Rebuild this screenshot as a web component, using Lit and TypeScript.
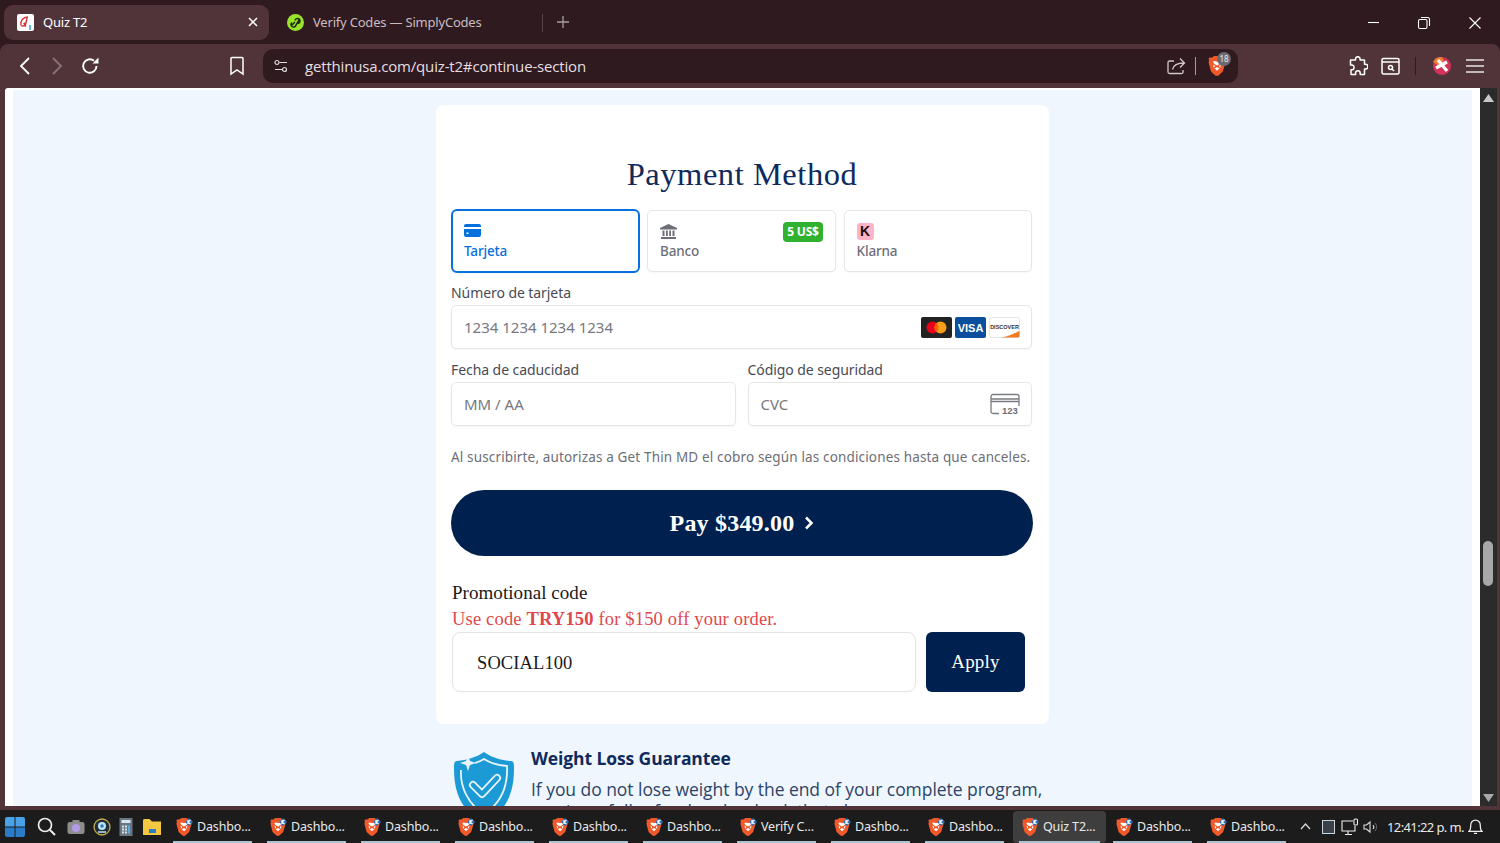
import { LitElement, html, css } from "lit";
import { customElement } from "lit/decorators.js";

const brave = (cls = "ic16") => html`<svg class=${cls} viewBox="0 0 16 18"><path fill="#f1592a" d="M3.2 1.6 5.4 0h5.2l2.2 1.6 1.9-.2.9 1.4-.6 1 .6 2-2.4 8.2-3.8 3.6L8 18l-1.600-.4-3.800-3.600L.4 5.800l.6-2-.7-1 .9-1.400z"/><path fill="#fff" d="M8 8.600 5.400 7 4.300 4.900l1.900-.3L8 5.200l1.800-.6 1.900.3L10.600 7zM8 10l2.200 1.200L8 13.200l-2.200-2zM4.600 7.600l1.700 1.500-1.200 1.800zm6.800 0-.5 3.300-1.200-1.800z"/></svg>`;

const taskIcon = html`<span class="task-ico">${brave("ic16")}<svg class="task-k" viewBox="0 0 10 10"><path fill="#2b6fb8" d="M1 5 5 1l4 4-4 4z"/><path stroke="#fff" stroke-width="1.200" fill="none" d="M4 3v4M6.500 3 4 5l2.500 2"/></svg></span>`;

const TASKS = ["Dashbo...", "Dashbo...", "Dashbo...", "Dashbo...", "Dashbo...", "Dashbo...", "Verify C...", "Dashbo...", "Dashbo...", "Quiz T2...", "Dashbo...", "Dashbo..."];

@customElement("app-root")
export class AppRoot extends LitElement {
  static styles = css`
    :host { display: block; width: 1500px; height: 843px; overflow: hidden; font-family: "Noto Sans", sans-serif; }
    * { box-sizing: border-box; }
    svg { display: block; flex: none; }
    .frame { height: 843px; display: flex; flex-direction: column; background: #2f1a20; }

    .tabstrip { height: 44px; display: flex; align-items: flex-start; padding: 5px 0 0 4px; color: #fff; font-size: 13px; flex: none; }
    .tab { width: 265px; height: 35px; display: flex; align-items: center; border-radius: 9px; background: #50343a; padding: 0 11px 1px 13px; }
    .fav { width: 17px; height: 17px; margin-right: 9px; flex: none; }
    .tab-title { flex: 1; letter-spacing: -.2px; }
    .tab.idle { width: 273px; background: none; padding-left: 18px; color: #c9bdc0; }
    .tab-div { width: 1px; height: 18px; background: #5a4248; margin-top: 9px; }
    .plus { margin: 11px 0 0 14px; }
    .winbtns { margin-left: auto; display: flex; height: 35px; align-items: center; padding-right: 19px; gap: 38px; }

    .toolbar { height: 44px; flex: none; background: #50343a; border-radius: 8px 8px 0 0; display: flex; align-items: center; padding-left: 18px; color: #fff; }
    .navs { display: flex; align-items: center; width: 245px; flex: none; }
    .nav-back { margin-right: 18px; }
    .nav-fwd { margin-right: 16px; }
    .nav-book { margin-left: 129px; }
    .urlbar { width: 975px; height: 34px; background: #2f1a20; border-radius: 10px; display: flex; align-items: center; padding: 0 0 0 11px; flex: none; }
    .url { margin-left: 17px; font-size: 15px; color: #e6dfe1; flex: 1; font-family: "Open Sans", "Noto Sans", sans-serif; letter-spacing: -.17px; }
    .url-div { width: 1px; height: 18px; background: #a89a9d; margin: 0 12px 0 9px; }
    .shield { position: relative; width: 30px; height: 24px; display: flex; align-items: center; }
    .shield svg { width: 18px; height: 20px; }
    .count { position: absolute; left: 9px; top: -2px; width: 14px; height: 14px; border-radius: 50%; background: #6a6a72; color: #eee; font-size: 8px; line-height: 14px; text-align: center; }
    .tool-right { display: flex; align-items: center; margin-left: 110px; }
    .tool-right .puzzle { margin-right: 13px; }
    .tool-div { width: 1px; height: 18px; background: #2f1a20; margin: 0 17px 0 15px; }
    .menu { margin-left: 14px; }

    .viewport { height: 718px; flex: none; display: flex; background: #50343a; padding-left: 5px; }
    .page { width: 1475px; height: 718px; overflow: hidden; background: #fff; border-radius: 3px 0 0 0; padding: 2px 8px 0; }
    .page-inner { height: 716px; overflow: hidden; background: #f0f6fe; padding: 15px 0 0 423px; }
    .scrollbar { width: 17px; height: 718px; flex: none; background: #2b2b2b; display: flex; flex-direction: column; align-items: center; justify-content: space-between; padding: 6px 0 4px; position: relative; }
    .thumb { position: absolute; left: 3px; top: 453px; width: 10px; height: 45px; border-radius: 5px; background: #a8a8a8; }

    .card { width: 613px; height: 619px; background: #fff; border-radius: 8px; padding: 50px 17px 0 15px; }
    h1 { margin: 0; font: 400 32.500px/38px "Liberation Serif", serif; color: #0f2a5c; text-align: center; letter-spacing: .55px; padding-left: 1px; }
    .ptabs { display: grid; grid-template-columns: 188.500px 189px 188.500px; gap: 7.500px; margin-top: 17px; }
    .ptab { height: 62px; position: relative; border: 1px solid #e6e6e6; border-radius: 5px; padding: 11px 12px 0; color: #6d6e78; font-size: 13.500px; font-weight: 500; box-shadow: 0 1px 2px rgba(0,0,0,.04); background: #fff; }
    .ptab.on { border: 2px solid #0570de; color: #0570de; padding: 10px 11px 0; margin: -1px 0 0 0; height: 64px; border-radius: 6px; }
    .ptab.on .ptab-ico { margin-bottom: 2px; }
    .ptab-ico { height: 18px; display: flex; align-items: center; margin-bottom: 1px; }
    .ptab-label { line-height: 20px; letter-spacing: -.15px; }
    .badge { position: absolute; top: 11px; right: 12px; height: 20px; width: 40px; border-radius: 4px; background: #30b130; color: #fff; font-size: 12px; font-weight: 700; line-height: 20px; text-align: center; letter-spacing: -.2px; }
    .kl { width: 17px; height: 17px; border-radius: 3px; background: #ffb3c7; color: #17120f; font: 700 14px/17px "Liberation Sans", sans-serif; text-align: center; }

    .field-label { display: block; font-size: 14px; line-height: 20px; color: #30313d; letter-spacing: -.07px; opacity: .88; }
    .stripe { width: 581px; margin-top: 10px; }
    .row { display: grid; grid-template-columns: 285px 284.500px; gap: 11.500px; margin-top: 11px; }
    .box { height: 44px; margin-top: 2px; display: flex; align-items: center; border: 1px solid #e6e6e6; border-radius: 5px; padding: 0 11px 0 12px; background: #fff; box-shadow: 0 1px 2px rgba(0,0,0,.04); }
    input { border: 0; outline: 0; background: none; padding: 0; margin: 0; flex: 1; min-width: 0; font: 400 15px "Noto Sans", sans-serif; color: #30313d; letter-spacing: 0; }
    input::placeholder { color: #77787f; opacity: 1; }
    .brands { display: flex; gap: 3px; }
    .terms { margin: 21px 0 0; font-size: 13.500px; line-height: 20px; color: #6d6e78; white-space: nowrap; letter-spacing: .15px; }

    .pay { display: flex; align-items: center; justify-content: center; gap: 10px; width: 582px; height: 66px; margin-top: 23px; border: 0; border-radius: 33px; background: #00214f; color: #fff; font: 700 24px "Liberation Serif", serif; letter-spacing: .2px; padding: 0; }
    .promo { margin: 26px 0 0 1px; font: 400 19px/22px "Liberation Serif", serif; color: #1a1a1a; letter-spacing: .05px; }
    .hint { margin: 4px 0 0 1px; font: 400 18.500px/22px "Liberation Serif", serif; color: #e0474c; letter-spacing: .17px; }
    .promo-row { display: flex; margin: 2px 0 0 1px; gap: 10px; }
    .promo-box { width: 464px; height: 60px; border: 1px solid #e3e3e3; border-radius: 8px; display: flex; align-items: center; padding: 2px 0 0 24px; }
    .promo-box input { font: 400 18.500px "Liberation Serif", serif; color: #1a1a1a; letter-spacing: .1px; }
    .apply { width: 99px; height: 60px; border: 0; border-radius: 6px; background: #00214f; color: #fff; font: 400 19px "Liberation Serif", serif; letter-spacing: .2px; padding: 0; }

    .guarantee { display: flex; width: 613px; margin-top: 23px; padding-left: 17px; gap: 16px; }
    .g-shield { margin-top: 5px; }
    .g-title { font: 700 17.500px/22px "Open Sans", sans-serif; color: #0f2a5c; letter-spacing: -.1px; }
    .g-text { margin-top: 9px; font: 400 17.500px/22px "Open Sans", sans-serif; color: #2d4468; letter-spacing: -.05px; white-space: nowrap; }

    .gap { height: 4px; flex: none; background: #50343a; }
    .taskbar { flex: 1; background: #1c1c1c; display: flex; align-items: center; color: #e9e9e9; font-size: 12.500px; position: relative; }
    .start { display: flex; align-items: center; width: 171px; padding-left: 5px; flex: none; }
    .start .s-search { margin: 0 11px 0 12px; }
    .start .s-cam { margin-right: 8px; }
    .start .s-web { margin-right: 8px; }
    .start .s-calc { margin-right: 10px; }
    .task { width: 94px; height: 33px; display: flex; align-items: center; gap: 5px; padding-left: 5px; position: relative; flex: none; white-space: nowrap; letter-spacing: -.15px; }
    .task::after { content: ""; position: absolute; left: 2px; right: 13px; bottom: 0; height: 2px; background: #a9c4d0; }
    .task.on::after { right: 11px; }
    .task.on::before { content: ""; position: absolute; left: -4px; right: 5px; top: 1px; bottom: 0; background: #3e3e3e; border-radius: 4px; }
    .task.on > * { position: relative; }
    .task-ico { position: relative; width: 16px; height: 18px; flex: none; }
    .task-ico .ic16 { width: 16px; height: 18px; }
    .task-k { position: absolute; width: 10px; height: 10px; right: -2px; top: -1px; }
    .tray { display: flex; align-items: center; margin-left: 1px; }
    .tray .t-chev { margin: 0 11px 0 0; }
    .tray .t-kb { margin-right: 6px; }
    .tray .t-net { margin-right: 4px; }
    .clock { margin: 0 4px 0 8px; font-size: 13px; letter-spacing: -.62px; white-space: nowrap; }
  `;

  render() {
    const stroke = "#fff";
    return html`<div class="frame">
      <div class="tabstrip">
        <div class="tab">
          <svg class="fav" viewBox="0 0 17 17"><rect width="17" height="17" rx="2" fill="#fff"/><path d="M11 3C6 3 3 7 4 11c1 2 4 1 5-2-1 0-2 .5-2.500 1M10 4l-2 9" stroke="#d9303a" stroke-width="1.300" fill="none"/><path d="M13 11v5" stroke="#45a7d8" stroke-width="1.600"/></svg>
          <span class="tab-title">Quiz T2</span>
          <svg width="10" height="10" viewBox="0 0 10 10"><path d="M1 1l8 8M9 1 1 9" stroke="#fff" stroke-width="1.500"/></svg>
        </div>
        <div class="tab idle">
          <svg class="fav" viewBox="0 0 17 17"><circle cx="8.500" cy="8.500" r="8.500" fill="#9be22d"/><path d="M5 11l3-3M8 6.500a2.500 2.500 0 1 1 3 3M5 8.500a2.500 2.500 0 1 0 3.500 3.500L12 6" stroke="#1c2a12" stroke-width="1.500" fill="none"/></svg>
          <span class="tab-title">Verify Codes — SimplyCodes</span>
        </div>
        <div class="tab-div"></div>
        <svg class="plus" width="12" height="12" viewBox="0 0 12 12"><path d="M6 0v12M0 6h12" stroke="#a99ca0" stroke-width="1.300"/></svg>
        <div class="winbtns">
          <svg width="11" height="11" viewBox="0 0 11 11"><path d="M0 5.500h11" stroke="#fff" stroke-width="1.100"/></svg>
          <svg width="14" height="14" viewBox="0 0 14 14" fill="none" stroke="#fff" stroke-width="1.100"><rect x="1.500" y="3.500" width="8.500" height="9" rx="1.500"/><path d="M4 1.500h6.500a2 2 0 0 1 2 2V10"/></svg>
          <svg width="12" height="12" viewBox="0 0 12 12"><path d="M.5.500l11 11M11.500.500l-11 11" stroke="#fff" stroke-width="1.100"/></svg>
        </div>
      </div>

      <div class="toolbar">
        <div class="navs">
          <svg class="nav-back" width="14" height="18" viewBox="0 0 14 18" fill="none"><path d="M11 1 3 9l8 8" stroke="#fff" stroke-width="1.800"/></svg>
          <svg class="nav-fwd" width="14" height="18" viewBox="0 0 14 18" fill="none"><path d="M3 1l8 8-8 8" stroke="#8a7478" stroke-width="1.800"/></svg>
          <svg width="20" height="20" viewBox="0 0 20 20" fill="none"><path d="M16.500 10A6.700 6.700 0 1 1 14 4.800" stroke="#fff" stroke-width="1.900"/><path d="M12.500 7.500h6v-6z" fill="#fff"/></svg>
          <svg class="nav-book" width="16" height="20" viewBox="0 0 16 20" fill="none"><path d="M2 2.500a1 1 0 0 1 1-1h10a1 1 0 0 1 1 1V18l-6-4-6 4z" stroke="#fff" stroke-width="1.500"/></svg>
        </div>
        <div class="urlbar">
          <svg width="14" height="14" viewBox="0 0 14 14" fill="none" stroke="#ddd" stroke-width="1.200"><circle cx="3" cy="3.500" r="2"/><path d="M5.500 3.500H13M1 10.500h7"/><circle cx="10.500" cy="10.500" r="2"/></svg>
          <span class="url">getthinusa.com/quiz-t2#continue-section</span>
          <svg width="19" height="18" viewBox="0 0 19 18" fill="none" stroke="#cfc7c9" stroke-width="1.300"><path d="M7 4H2.500A1.500 1.500 0 0 0 1 5.500V15a1.500 1.500 0 0 0 1.500 1.500h11.500A1.500 1.500 0 0 0 16 15v-2"/><path d="M5.500 12.500C6.500 8 10 6 17 6M13 1.500 17.500 6 13 10.500"/></svg>
          <div class="url-div"></div>
          <div class="shield">${brave()}<span class="count">18</span></div>
        </div>
        <div class="tool-right">
          <svg class="puzzle" width="20" height="20" viewBox="0 0 20 20" fill="none"><path d="M7.500 4V3a2.300 2.300 0 0 1 4.600 0v1h4.400v4.300h1a2.400 2.400 0 0 1 0 4.800h-1v5.400h-4.300V17a2.300 2.300 0 0 0-4.600 0v1.500H3v-4.700h1.200a2.400 2.400 0 0 0 0-4.700H2.500V4z" stroke="${stroke}" stroke-width="1.500" stroke-linejoin="round"/></svg>
          <svg width="19" height="18" viewBox="0 0 19 18" fill="none" stroke="#fff" stroke-width="1.500"><rect x="1" y="1.500" width="17" height="15.500" rx="1.500"/><path d="M1 5h17"/><circle cx="9.500" cy="10.500" r="2"/><path d="M11 12l2 2"/></svg>
          <div class="tool-div"></div>
          <svg width="18" height="18" viewBox="0 0 18 18"><circle cx="9" cy="9" r="9" fill="#d4315a"/><path d="M0 5a9 9 0 0 1 9-5l2 4-5 5z" fill="#ef7f34"/><path d="M5 3l9 11M14 5 3 11" stroke="#fff" stroke-width="3.200"/></svg>
          <svg class="menu" width="20" height="16" viewBox="0 0 20 16"><path d="M1 2h18M1 8h18M1 14h18" stroke="#e8e2e3" stroke-width="1.600"/></svg>
        </div>
      </div>

      <div class="viewport">
        <main class="page"><div class="page-inner">
          <section class="card">
            <h1>Payment Method</h1>
            <div class="ptabs">
              <div class="ptab on">
                <div class="ptab-ico"><svg width="17" height="13" viewBox="0 0 17 13"><path fill="#0570de" d="M2 0h13a2 2 0 0 1 2 2v1H0V2a2 2 0 0 1 2-2zM0 5h17v6a2 2 0 0 1-2 2H2a2 2 0 0 1-2-2z"/><rect x="2.500" y="8.500" width="2" height="1.500" fill="#fff"/></svg></div>
                <div class="ptab-label">Tarjeta</div>
              </div>
              <div class="ptab">
                <div class="ptab-ico"><svg width="17" height="15" viewBox="0 0 17 15"><path fill="#6d6e78" d="M8.500 0 17 4v1.500H0V4zM1 13h15v2H1zM2.500 6.500h2V12h-2zM6 6.500h1.800V12H6zm3.200 0H11V12H9.200zm3.300 0h2V12h-2z"/></svg></div>
                <div class="ptab-label">Banco</div>
                <span class="badge">5 US$</span>
              </div>
              <div class="ptab">
                <div class="ptab-ico"><span class="kl">K</span></div>
                <div class="ptab-label">Klarna</div>
              </div>
            </div>

            <div class="stripe">
              <label class="field-label">Número de tarjeta</label>
              <div class="box">
                <input placeholder="1234 1234 1234 1234" />
                <div class="brands">
                  <svg width="31" height="21" viewBox="0 0 31 21"><rect width="31" height="21" rx="2" fill="#222"/><circle cx="11.500" cy="10.500" r="6" fill="#eb001b"/><circle cx="19.500" cy="10.500" r="6" fill="#f79e1b"/><path d="M15.500 6a6 6 0 0 1 0 9 6 6 0 0 1 0-9z" fill="#ff5f00"/></svg>
                  <svg width="31" height="21" viewBox="0 0 31 21"><rect width="31" height="21" rx="2" fill="#0a4f9e"/><text x="15.500" y="14.500" text-anchor="middle" font-family="Liberation Sans" font-weight="700" font-size="11" fill="#fff">VISA</text></svg>
                  <svg width="31" height="21" viewBox="0 0 31 21"><rect x=".5" y=".5" width="30" height="20" rx="2" fill="#fff" stroke="#e4e4e4"/><text x="15.500" y="12" text-anchor="middle" font-family="Liberation Sans" font-weight="700" font-size="5.500" fill="#333">DISCOVER</text><path d="M12 20.500C20 19 26 16 30.500 14v5a1.500 1.500 0 0 1-1.500 1.500z" fill="#ee7a23"/></svg>
                </div>
              </div>
              <div class="row">
                <div>
                  <label class="field-label">Fecha de caducidad</label>
                  <div class="box"><input placeholder="MM / AA" /></div>
                </div>
                <div>
                  <label class="field-label">Código de seguridad</label>
                  <div class="box">
                    <input placeholder="CVC" />
                    <svg width="30" height="22" viewBox="0 0 30 22" fill="none"><path d="M9 20.500H3a2 2 0 0 1-2-2v-15a2 2 0 0 1 2-2h24a2 2 0 0 1 2 2V13M1 6h28v2.500H1z" stroke="#7a7b82" stroke-width="1.300"/><text x="12" y="21" font-family="Liberation Sans" font-size="9.500" font-weight="700" fill="#6d6e78">123</text></svg>
                  </div>
                </div>
              </div>
              <p class="terms">Al suscribirte, autorizas a Get Thin MD el cobro según las condiciones hasta que canceles.</p>
            </div>

            <button class="pay">Pay $349.00
              <svg width="10" height="14" viewBox="0 0 10 14" fill="none"><path d="M2 1.500 7.500 7 2 12.500" stroke="#fff" stroke-width="2.500"/></svg>
            </button>
            <div class="promo">Promotional code</div>
            <div class="hint">Use code <b>TRY150</b> for $150 off your order.</div>
            <div class="promo-row">
              <div class="promo-box"><input value="SOCIAL100" /></div>
              <button class="apply">Apply</button>
            </div>
          </section>

          <section class="guarantee">
            <svg class="g-shield" width="62" height="72" viewBox="0 0 62 72">
              <path fill="#1c9ad6" d="M31 0c7 5 15 8 27 9 3 0 3 3 3 8 0 26-9 43-30 54C10 60 1 43 1 17c0-5 0-8 3-8 10-1 20-4 27-9z"/>
              <path fill="none" stroke="#e8f5fc" stroke-width="1.800" d="M22 11c3-1 6-2 9-4 6 4 12 6 23 7 1 21-7 38-23 48C15 52 7 35 8 18"/>
              <path fill="#e8f5fc" d="M15 3l2 6 6 2-6 2-2 6-2-6-6-2 6-2z"/>
              <path fill="none" stroke="#e8f5fc" stroke-width="8" stroke-linejoin="round" stroke-linecap="round" d="M20 33l9 9 15-16"/>
              <path fill="none" stroke="#1c9ad6" stroke-width="4.500" stroke-linejoin="round" stroke-linecap="round" d="M20 33l9 9 15-16"/>
            </svg>
            <div>
              <div class="g-title">Weight Loss Guarantee</div>
              <div class="g-text">If you do not lose weight by the end of your complete program,<br />receive a full refund and a check that also pays you</div>
            </div>
          </section>
        </div></main>
        <div class="scrollbar">
          <svg width="11" height="8" viewBox="0 0 11 8"><path d="M5.500 0l5.500 8H0z" fill="#c8c8c8"/></svg>
          <div class="thumb"></div>
          <svg width="11" height="8" viewBox="0 0 11 8"><path d="M5.500 8 0 0h11z" fill="#a8a8a8"/></svg>
        </div>
      </div>
      <div class="gap"></div>

      <footer class="taskbar">
        <div class="start">
          <svg width="20" height="20" viewBox="0 0 20 20"><path fill="#4aa3e8" d="M0 2a2 2 0 0 1 2-2h7.500v9.500H0zM10.500 0H18a2 2 0 0 1 2 2v7.500h-9.500z"/><path fill="#2a7cc9" d="M0 10.500h9.500V20H2a2 2 0 0 1-2-2zM10.500 10.500H20V18a2 2 0 0 1-2 2h-7.500z"/></svg>
          <svg class="s-search" width="19" height="19" viewBox="0 0 19 19" fill="none"><circle cx="8" cy="8" r="6.500" stroke="#eee" stroke-width="1.700"/><path d="M13 13l5 5" stroke="#eee" stroke-width="1.900"/></svg>
          <svg class="s-cam" width="18" height="14" viewBox="0 0 17 14"><rect y="2" width="17" height="12" rx="2" fill="#8d8d8d"/><rect x="5" width="7" height="3" fill="#8d8d8d"/><circle cx="8.500" cy="8" r="4" fill="#b19be8"/></svg>
          <svg class="s-web" width="18" height="18" viewBox="0 0 18 18" fill="none"><circle cx="9" cy="9" r="8" stroke="#c4a94a" stroke-width="1.300" fill="#20303a"/><circle cx="9" cy="8" r="4" fill="#bfe2f3"/><circle cx="9" cy="8" r="1.700" fill="#2a7cc9"/><path d="M5 14h8" stroke="#bfe2f3" stroke-width="1.500"/></svg>
          <svg class="s-calc" width="14" height="18" viewBox="0 0 13 18"><rect width="13" height="18" fill="#6b7680"/><rect x="2" y="2" width="9" height="3" fill="#d6e6ef"/><path d="M2.500 7.500h2v2h-2zm3 0h2v2h-2zm-3 3h2v2h-2zm3 0h2v2h-2zm-3 3h2v2h-2zm3 0h2v2h-2z" fill="#d6e6ef"/><rect x="8.500" y="7.500" width="2" height="8" fill="#5aa9e0"/></svg>
          <svg width="18" height="16" viewBox="0 0 18 16"><path d="M0 1.500A1.500 1.500 0 0 1 1.500 0h5L9 2.500h9V16H0z" fill="#f5c842"/><rect x="6" y="10" width="7" height="4" fill="#2a7cc9"/></svg>
        </div>
        ${TASKS.map((t, i) => html`<div class="task ${i === 9 ? "on" : ""}">${taskIcon}<span>${t}</span></div>`)}
        <div class="tray">
          <svg class="t-chev" width="11" height="7" viewBox="0 0 11 7" fill="none"><path d="M1 6l4.500-5L10 6" stroke="#ddd" stroke-width="1.200"/></svg>
          <svg class="t-kb" width="13" height="14" viewBox="0 0 13 14"><rect x=".5" y=".5" width="12" height="13" fill="#3b4147" stroke="#c9d6de"/></svg>
          <svg class="t-net" width="18" height="18" viewBox="0 0 18 18" fill="none" stroke="#eee" stroke-width="1.100"><path d="M12 3H1v10h13v-5M7 13v3M4 16.500h7"/><rect x="13" y="1" width="3.500" height="6" rx="1"/></svg>
          <svg width="16" height="14" viewBox="0 0 16 14" fill="none" stroke="#ddd" stroke-width="1.100"><path d="M1 5v4h2.500L7 12V2L3.500 5z"/><path d="M10 5a3 3 0 0 1 0 4" /><path d="M12 3a6 6 0 0 1 0 8" stroke="#666"/></svg>
          <span class="clock">12:41:22 p. m.</span>
          <svg width="15" height="17" viewBox="0 0 14 16" fill="none" stroke="#eee" stroke-width="1.200"><path d="M1 12.500c1.500-1.500 1.500-3 1.500-6a4.500 4.500 0 0 1 9 0c0 3 0 4.500 1.500 6zM5.500 14.500h3"/></svg>
        </div>
      </footer>
    </div>`;
  }
}
